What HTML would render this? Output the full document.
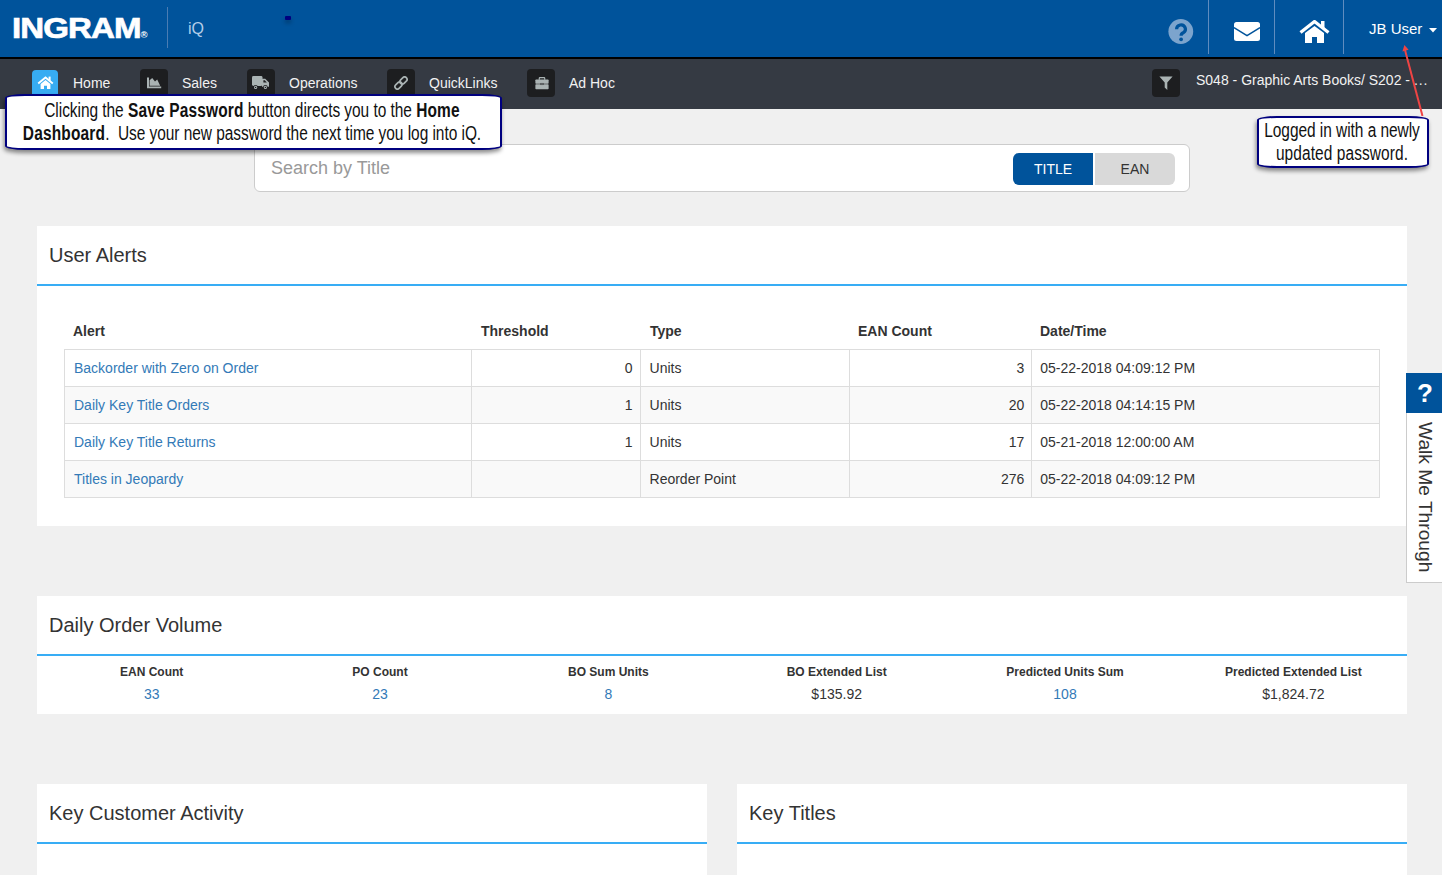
<!DOCTYPE html>
<html><head><meta charset="utf-8">
<style>
*{box-sizing:border-box;margin:0;padding:0}
html,body{width:1442px;height:875px;overflow:hidden;background:#f0f0f0;font-family:"Liberation Sans",sans-serif;color:#333;font-size:14px}
.abs{position:absolute}
#hdr{position:absolute;left:0;top:0;width:1442px;height:57px;background:#00539b}
#blk{position:absolute;left:0;top:57px;width:1442px;height:2px;background:#000}
#nav{position:absolute;left:0;top:59px;width:1442px;height:50px;background:#353a43}
.logo{position:absolute;left:12px;top:11px;font-weight:bold;font-size:29.5px;line-height:34px;color:#fff;transform-origin:0 0;transform:scaleX(1.12);letter-spacing:-0.8px;-webkit-text-stroke:0.7px #fff}
.vdiv{position:absolute;top:0;width:1px;height:54px;background:#5f8cbf}
.nbox{position:absolute;top:69px;width:28px;height:28px;border-radius:4px;background:#1d1e20}
.ntxt{position:absolute;top:75px;font-size:14px;color:#f2f2f2}
.callout{position:absolute;background:#fff;border:2px solid #00007f;border-radius:20px/4px;box-shadow:-1px 3px 4px rgba(0,0,0,.45);color:#111;text-align:center;font-size:20px;line-height:23px}
.callout b{letter-spacing:0.22px}
.callout .in{letter-spacing:-0.05px;position:absolute;left:50%;top:0;transform-origin:0 0;transform:scaleX(.773) translateX(-50%);white-space:nowrap}
.panel{position:absolute;background:#fff}
.ptitle{position:absolute;left:12px;font-size:20px;color:#333;margin-top:1px}
.pline{position:absolute;left:0;right:0;height:2px;background:#38adf5}
table.t{position:absolute;left:64px;top:349px;border-collapse:collapse;width:1316px}
table.t td{border:1px solid #ddd;height:37px;padding:0 8px;font-size:14px;color:#333}
table.t tr:nth-child(even) td{background:#f9f9f9}
table.t td a{color:#337ab7;text-decoration:none}
table.t td.r{text-align:right;padding-right:7px}
table.t td:nth-child(3),table.t td:nth-child(1){padding-left:9px}
.th{position:absolute;top:323px;font-weight:bold;font-size:14px;color:#333}
.stat{position:absolute;top:664px;width:228.33px;text-align:center}
.stat .l{font-weight:bold;font-size:12px;color:#333;height:16px;line-height:16px}
.stat .v{font-size:14px;color:#333;margin-top:6px;line-height:16px}
.stat .v.a{color:#337ab7}
</style></head><body>
<div id="hdr">
  <div class="logo">INGRAM<span style="font-size:8.5px;position:relative;top:0px;left:0px;-webkit-text-stroke:0">&#174;</span></div>
  <div class="vdiv" style="left:167px;top:7px;height:41px;background:#4a7cb3"></div>
  <div class="abs" style="left:188px;top:20px;font-size:16px;color:#b3cde8">iQ</div>
  <div class="abs" style="left:285px;top:16px;width:6px;height:4px;background:#00007f;border-radius:1px;box-shadow:0 3px 4px rgba(0,0,0,.3)"></div>
  <!-- help circle -->
  <svg class="abs" style="left:1168px;top:19px" width="26" height="26" viewBox="0 0 26 26">
    <circle cx="12.8" cy="12.5" r="12.4" fill="#7ca4cd"/>
    <path d="M8.6 10.3 A4.4 4.2 0 1 1 15.2 13.8 Q13.1 14.8 13.1 16.8" stroke="#00539b" stroke-width="3.2" fill="none"/>
    <circle cx="13.1" cy="20.3" r="1.9" fill="#00539b"/>
  </svg>
  <div class="vdiv" style="left:1208px"></div>
  <svg class="abs" style="left:1234px;top:22px" width="26" height="19" viewBox="0 0 26 19">
    <rect x="0" y="0" width="26" height="19" rx="2.5" fill="#fff"/>
    <path d="M0 5.6 L13 13.6 L26 5.6" stroke="#00539b" stroke-width="1.5" fill="none"/>
  </svg>
  <div class="vdiv" style="left:1274px"></div>
  <svg class="abs" style="left:1299px;top:20px" width="31" height="24" viewBox="0 0 31 24">
    <path d="M1.5 12.5 L15.5 1.5 L29.5 12.5" stroke="#fff" stroke-width="3.2" fill="none" stroke-linejoin="miter"/>
    <rect x="22" y="1" width="3.5" height="7" fill="#fff"/>
    <path d="M6 13 L15.5 6 L25 13 V23 H18 V17 H13 V23 H6 Z" fill="#fff"/>
  </svg>
  <div class="vdiv" style="left:1343px"></div>
  <div class="abs" style="left:1369px;top:20px;font-size:15px;color:#fff">JB User</div>
  <svg class="abs" style="left:1429px;top:28px" width="9" height="5" viewBox="0 0 9 5"><path d="M0 0 H8 L4 4.5 Z" fill="#fff"/></svg>
</div>
<div id="blk"></div>
<div id="nav">
</div>
<!-- nav items -->
<div class="nbox" style="left:32px;top:70px;width:26px;background:#37acf2"></div>
<svg class="abs" style="left:37px;top:76px" width="17" height="14" viewBox="0 0 17 14">
  <path d="M1.2 7.6 L8.5 1.6 L15.8 7.6" stroke="#fff" stroke-width="1.9" fill="none"/>
  <rect x="11.6" y="0.6" width="2" height="4.2" fill="#fff"/>
  <path d="M3.6 8 L8.5 4 L13.4 8 V13 H10 V9.8 H7 V13 H3.6 Z" fill="#fff"/>
</svg>
<div class="ntxt" style="left:73px">Home</div>
<div class="nbox" style="left:140px"></div>
<svg class="abs" style="left:147px;top:77px" width="15" height="12" viewBox="0 0 15 12">
  <path d="M0 0.5 H2 V9.4 H14.2 V11.2 H0 Z" fill="#aab3b3"/>
  <path d="M2.6 8.8 V3.2 L5.2 1 L8 4.6 L10.2 2.6 L13.2 8.8 Z" fill="#aab3b3"/>
</svg>
<div class="ntxt" style="left:182px">Sales</div>
<div class="nbox" style="left:247px"></div>
<svg class="abs" style="left:252px;top:76px" width="18" height="14" viewBox="0 0 18 14">
  <rect x="0" y="0" width="10.5" height="10" rx="1.4" fill="#aab3b3"/>
  <path d="M10 2.8 H13.2 L17 6.6 V10.8 H10 Z" fill="#aab3b3"/>
  <path d="M11.4 4.2 H12.8 L14.8 6.4 H11.4 Z" fill="#1d1e20"/>
  <circle cx="3.6" cy="11.4" r="2.3" fill="#1d1e20"/>
  <circle cx="3.6" cy="11.4" r="1.6" fill="#aab3b3"/>
  <circle cx="3.6" cy="11.4" r="0.7" fill="#1d1e20"/>
  <circle cx="13.4" cy="11.4" r="2.3" fill="#1d1e20"/>
  <circle cx="13.4" cy="11.4" r="1.6" fill="#aab3b3"/>
  <circle cx="13.4" cy="11.4" r="0.7" fill="#1d1e20"/>
</svg>
<div class="ntxt" style="left:289px">Operations</div>
<div class="nbox" style="left:387px"></div>
<svg class="abs" style="left:394px;top:76px" width="14" height="14" viewBox="0 0 14 14">
  <g transform="rotate(-45 7 7)">
    <rect x="-0.5" y="4.6" width="8" height="4.8" rx="2.4" stroke="#aab3b3" stroke-width="1.7" fill="none"/>
    <rect x="6.5" y="4.6" width="8" height="4.8" rx="2.4" stroke="#aab3b3" stroke-width="1.7" fill="none"/>
  </g>
</svg>
<div class="ntxt" style="left:429px">QuickLinks</div>
<div class="nbox" style="left:527px"></div>
<svg class="abs" style="left:534.5px;top:77px" width="14" height="12.5" viewBox="0 0 15 13.4">
  <path d="M4.6 3 V1.3 Q4.6 0.6 5.3 0.6 H9.7 Q10.4 0.6 10.4 1.3 V3" stroke="#aab3b3" stroke-width="1.3" fill="none"/>
  <rect x="0.4" y="2.8" width="14.2" height="4.4" rx="0.8" fill="#aab3b3"/>
  <rect x="0.4" y="7.8" width="14.2" height="5.2" rx="0.8" fill="#aab3b3"/>
  <rect x="6" y="6.4" width="3" height="2.2" fill="#1d1e20"/>
  <rect x="6.6" y="6.9" width="1.8" height="1.2" fill="#aab3b3"/>
</svg>
<div class="ntxt" style="left:569px">Ad Hoc</div>
<div class="nbox" style="left:1152px"></div>
<svg class="abs" style="left:1159px;top:76px" width="14" height="15" viewBox="0 0 14 15">
  <path d="M0.4 0.4 H13.6 L8.3 6.4 V14 L5.7 11.6 V6.4 Z" fill="#aab3b3"/>
</svg>
<div class="ntxt" style="left:1196px;top:71.5px">S048 - Graphic Arts Books/ S202 - <span style="letter-spacing:0.9px">...</span></div>

<!-- search -->
<div class="abs" style="left:254px;top:144px;width:936px;height:48px;background:#fff;border:1px solid #ccc;border-radius:6px"></div>
<div class="abs" style="left:271px;top:158px;font-size:18px;color:#999">Search by Title</div>
<div class="abs" style="left:1013px;top:153px;width:80px;height:32px;background:#00539b;border-radius:6px 0 0 6px;color:#fff;text-align:center;line-height:32px;font-size:14px">TITLE</div>
<div class="abs" style="left:1095px;top:153px;width:80px;height:32px;background:#d9d9d9;border-radius:0 6px 6px 0;color:#333;text-align:center;line-height:32px;font-size:14px">EAN</div>

<!-- User Alerts -->
<div class="panel" style="left:37px;top:226px;width:1370px;height:300px">
  <div class="ptitle" style="top:17px">User Alerts</div>
  <div class="pline" style="top:58px"></div>
</div>
<div class="th" style="left:73px">Alert</div>
<div class="th" style="left:481px">Threshold</div>
<div class="th" style="left:650px">Type</div>
<div class="th" style="left:858px">EAN Count</div>
<div class="th" style="left:1040px">Date/Time</div>
<table class="t">
<colgroup><col style="width:407px"><col style="width:169px"><col style="width:210px"><col style="width:182px"><col style="width:348px"></colgroup>
<tr><td><a>Backorder with Zero on Order</a></td><td class="r">0</td><td>Units</td><td class="r">3</td><td>05-22-2018 04:09:12 PM</td></tr>
<tr><td><a>Daily Key Title Orders</a></td><td class="r">1</td><td>Units</td><td class="r">20</td><td>05-22-2018 04:14:15 PM</td></tr>
<tr><td><a>Daily Key Title Returns</a></td><td class="r">1</td><td>Units</td><td class="r">17</td><td>05-21-2018 12:00:00 AM</td></tr>
<tr><td><a>Titles in Jeopardy</a></td><td class="r"></td><td>Reorder Point</td><td class="r">276</td><td>05-22-2018 04:09:12 PM</td></tr>
</table>

<!-- Daily Order Volume -->
<div class="panel" style="left:37px;top:596px;width:1370px;height:118px">
  <div class="ptitle" style="top:17px">Daily Order Volume</div>
  <div class="pline" style="top:58px"></div>
</div>
<div class="stat" style="left:37.50px"><div class="l">EAN Count</div><div class="v a">33</div></div>
<div class="stat" style="left:265.83px"><div class="l">PO Count</div><div class="v a">23</div></div>
<div class="stat" style="left:494.17px"><div class="l">BO Sum Units</div><div class="v a">8</div></div>
<div class="stat" style="left:722.50px"><div class="l">BO Extended List</div><div class="v">$135.92</div></div>
<div class="stat" style="left:950.83px"><div class="l">Predicted Units Sum</div><div class="v a">108</div></div>
<div class="stat" style="left:1179.16px"><div class="l">Predicted Extended List</div><div class="v">$1,824.72</div></div>

<!-- bottom panels -->
<div class="panel" style="left:37px;top:784px;width:670px;height:100px">
  <div class="ptitle" style="top:17px">Key Customer Activity</div>
  <div class="pline" style="top:58px"></div>
</div>
<div class="panel" style="left:737px;top:784px;width:670px;height:100px">
  <div class="ptitle" style="top:17px">Key Titles</div>
  <div class="pline" style="top:58px"></div>
</div>

<!-- walk me through -->
<div class="abs" style="left:1406px;top:373px;width:40px;height:210px;background:#fff;border:1px solid #ccc;border-right:none"></div>
<div class="abs" style="left:1406px;top:373px;width:37px;height:40px;background:#00539b;color:#fff;font-weight:bold;font-size:26px;text-align:center;line-height:40px;padding-left:1px">?</div>
<div class="abs" style="left:1414.7px;top:422px;width:20px;height:150px;"><div style="position:absolute;left:0;top:0;width:150px;transform-origin:0 0;transform:translate(20px,0) rotate(90deg);font-size:19.2px;color:#333;white-space:nowrap;line-height:20px">Walk Me Through</div></div>

<!-- callouts -->
<div class="callout" style="left:5px;top:94px;width:497px;height:56px;"><div class="in" style="top:2.8px;left:calc(50% - 1.5px)"><span>Clicking the <b>Save Password</b> button directs you to the <b>Home</b></span><br><span><b>Dashboard</b>.&nbsp; Use your new password the next time you log into iQ.</span></div></div>
<div class="callout" style="left:1257px;top:116px;width:172px;height:52px;"><div class="in" style="top:1.3px;left:calc(50% - 1.3px)">Logged in with a newly<br><span style="letter-spacing:0.12px">updated password.</span></div></div>
<svg class="abs" style="left:0;top:0" width="1442" height="875" viewBox="0 0 1442 875">
  <line x1="1422.5" y1="116" x2="1405" y2="50" stroke="#ef4444" stroke-width="2"/>
  <path d="M1404.4 45 L1402.4 51.6 L1408.6 49.8 Z" fill="#ef4444"/>
</svg>
</body></html>
